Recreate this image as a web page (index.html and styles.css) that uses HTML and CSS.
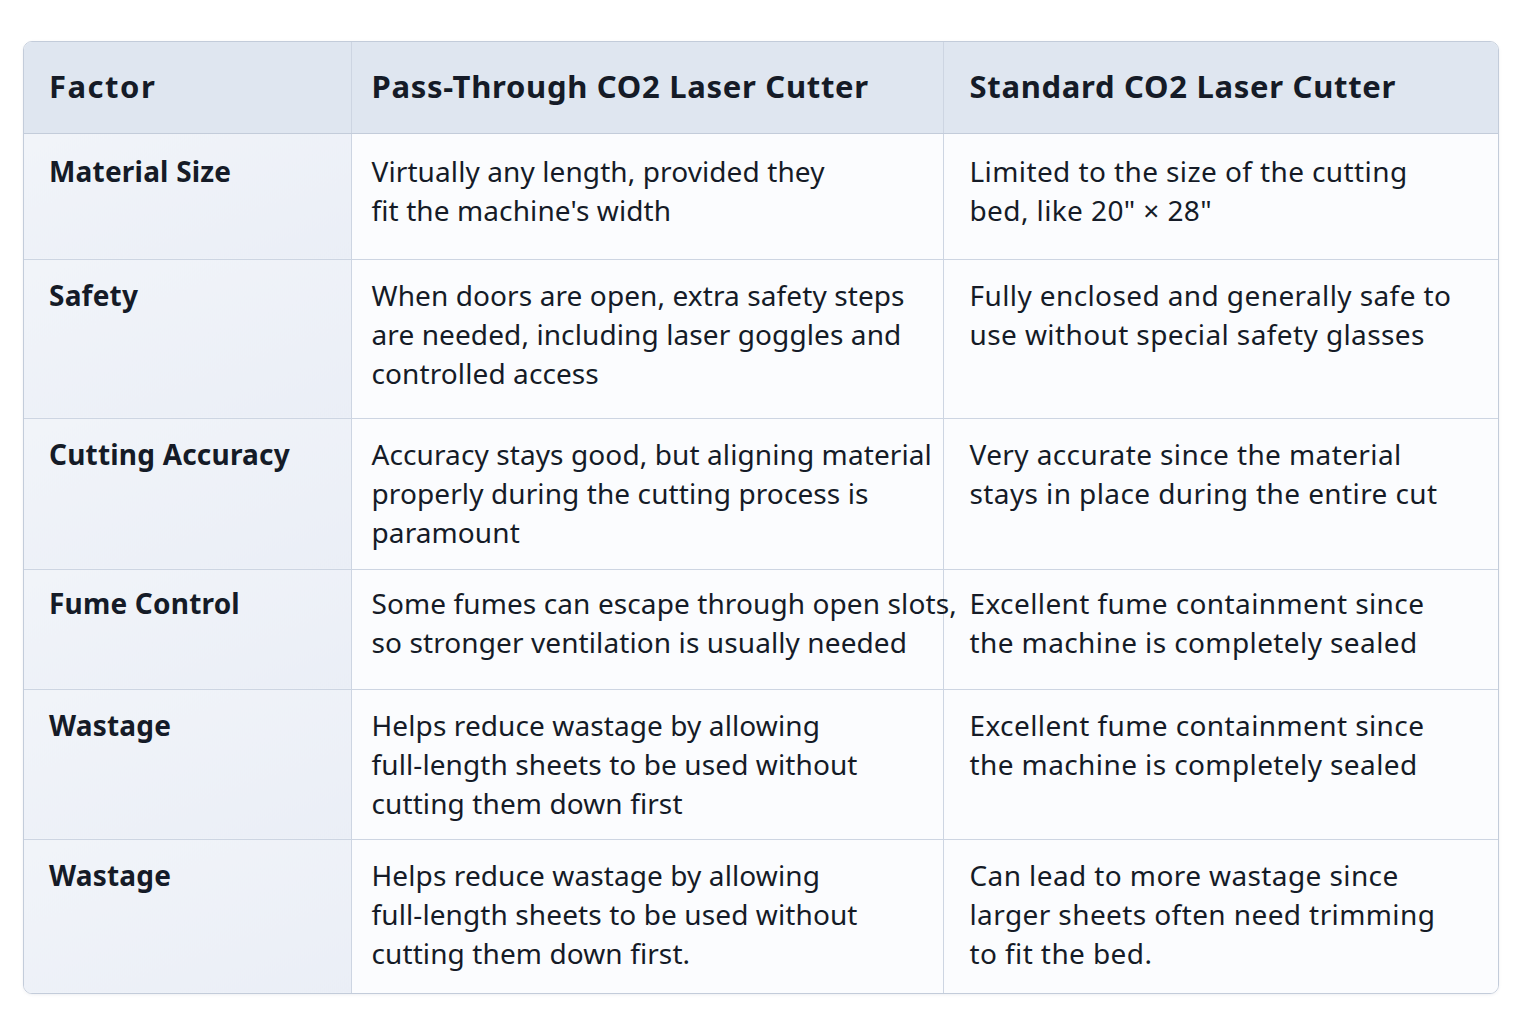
FILE: index.html
```html
<!DOCTYPE html>
<html>
<head>
<meta charset="utf-8">
<link rel="stylesheet" href="styles.css">
</head>
<body>
<div class="page">
  <div class="table-wrap">
    <table class="compare">
      <colgroup>
        <col class="c1"><col class="c2"><col class="c3">
      </colgroup>
      <thead>
        <tr class="head">
          <th class="col1">Factor</th>
          <th class="col2">Pass-Through CO2 Laser Cutter</th>
          <th class="col3">Standard CO2 Laser Cutter</th>
        </tr>
      </thead>
      <tbody>
        <tr class="r1">
          <td class="col1">Material Size</td>
          <td class="col2">Virtually any length, provided they<br>fit the machine's width</td>
          <td class="col3">Limited to the size of the cutting<br>bed, like 20" × 28"</td>
        </tr>
        <tr class="r2">
          <td class="col1">Safety</td>
          <td class="col2">When doors are open, extra safety steps<br>are needed, including laser goggles and<br>controlled access</td>
          <td class="col3">Fully enclosed and generally safe to<br>use without special safety glasses</td>
        </tr>
        <tr class="r3">
          <td class="col1">Cutting Accuracy</td>
          <td class="col2">Accuracy stays good, but aligning material<br>properly during the cutting process is<br>paramount</td>
          <td class="col3">Very accurate since the material<br>stays in place during the entire cut</td>
        </tr>
        <tr class="r4">
          <td class="col1">Fume Control</td>
          <td class="col2">Some fumes can escape through open slots,<br>so stronger ventilation is usually needed</td>
          <td class="col3">Excellent fume containment since<br>the machine is completely sealed</td>
        </tr>
        <tr class="r5">
          <td class="col1">Wastage</td>
          <td class="col2">Helps reduce wastage by allowing<br>full-length sheets to be used without<br>cutting them down first</td>
          <td class="col3">Excellent fume containment since<br>the machine is completely sealed</td>
        </tr>
        <tr class="r6">
          <td class="col1">Wastage</td>
          <td class="col2">Helps reduce wastage by allowing<br>full-length sheets to be used without<br>cutting them down first.</td>
          <td class="col3">Can lead to more wastage since<br>larger sheets often need trimming<br>to fit the bed.</td>
        </tr>
      </tbody>
    </table>
  </div>
</div>
</body>
</html>
```

FILE: styles.css
```css
html, body {
  margin: 0;
  padding: 0;
  background: #ffffff;
}

.page {
  padding: 41px 38px 30px 23px;
  font-family: "Noto Sans", "Open Sans", sans-serif;
  color: #151b27;
}

.table-wrap {
  width: 1474px;
  border: 1.5px solid #c3ccda;
  border-radius: 9px;
  overflow: hidden;
  box-shadow: 0 1px 3px rgba(120, 135, 160, 0.12);
}

.compare {
  width: 100%;
  border-collapse: collapse;
  table-layout: fixed;
}

.c1 { width: 327px; }
.c2 { width: 592px; }
.c3 { width: auto; }

.compare th,
.compare td {
  border-right: 1.5px solid #cdd5e2;
  border-bottom: 1.5px solid #cdd5e2;
  text-align: left;
  vertical-align: top;
}

.compare th:last-child,
.compare td:last-child {
  border-right: none;
}

.compare tbody tr:last-child td {
  border-bottom: none;
}

.head th {
  height: 91px;
  box-sizing: border-box;
  vertical-align: middle;
  background: #dfe6f0;
  font-size: 31px;
  font-weight: 700;
  letter-spacing: 0.7px;
  padding-top: 0;
  padding-bottom: 3px;
  border-bottom: 1.5px solid #c3ccda;
}

.head th.col1 {
  letter-spacing: 1.5px;
}

.compare td {
  box-sizing: border-box;
  font-size: 28px;
  line-height: 39px;
  padding-top: 16px;
  padding-bottom: 0;
  background: #fbfcfe;
  letter-spacing: 0.1px;
}

.compare td.col1 {
  background: linear-gradient(160deg, #f1f4f9 0%, #eaeef6 100%);
  font-weight: 700;
  font-size: 28px;
  letter-spacing: 0.2px;
}

.compare td.col3 {
  letter-spacing: 0.4px;
}

.col1 { padding-left: 25px; padding-right: 10px; }
.col2 { padding-left: 20px; padding-right: 0; white-space: nowrap; }
.col3 { padding-left: 26px; padding-right: 10px; white-space: nowrap; }

.r1 td { height: 126px; }
.r1 td { padding-top: 18px; }
.r2 td { height: 159px; }
.r3 td { height: 151px; }
.r4 td { height: 120px; }
.r4 td { padding-top: 14px; }
.r5 td { height: 150px; }
.r6 td { height: 154px; }
```
